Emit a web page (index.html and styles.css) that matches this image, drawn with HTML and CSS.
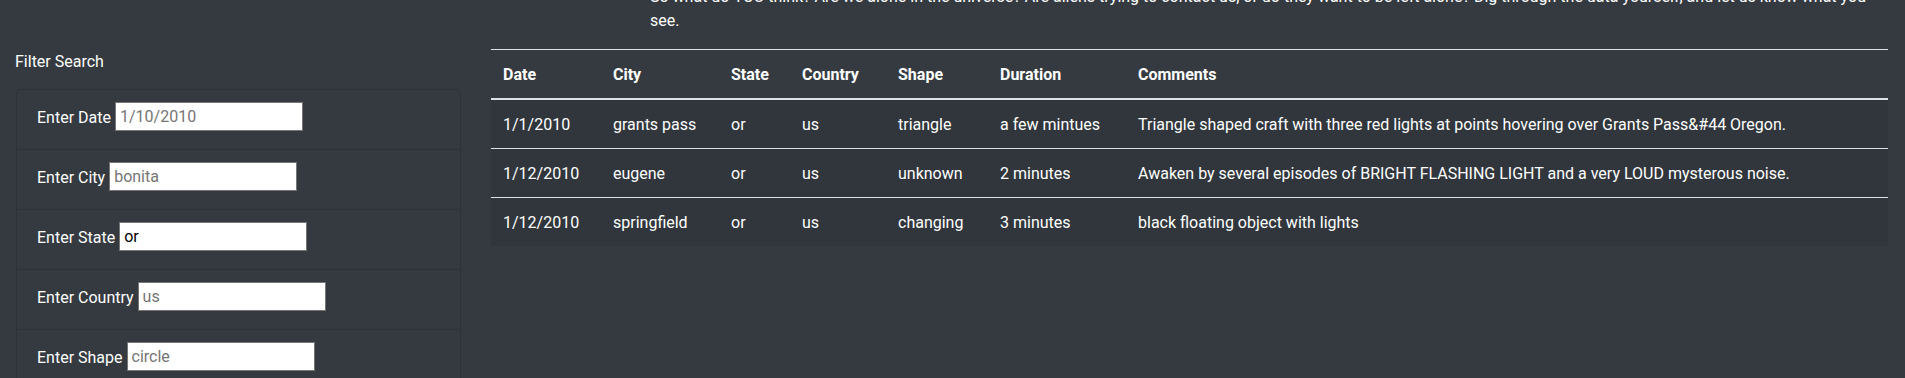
FILE: index.html
```html
<!DOCTYPE html>
<html lang="en">
<head>
  <meta charset="UTF-8">
  <meta name="viewport" content="width=device-width, initial-scale=1.0">
  <title>UFO Sightings</title>
  <link rel="stylesheet" href="styles.css">
</head>
<body>
  <div class="page">
    <div class="filters">
      <p class="filters-title">Filter Search</p>
      <ul class="filter-list">
        <li class="filter">
          <label for="datetime">Enter Date</label>
          <input id="datetime" type="text" placeholder="1/10/2010">
        </li>
        <li class="filter">
          <label for="city">Enter City</label>
          <input id="city" type="text" placeholder="bonita">
        </li>
        <li class="filter">
          <label for="state">Enter State</label>
          <input id="state" type="text" placeholder="ca" value="or">
        </li>
        <li class="filter">
          <label for="country">Enter Country</label>
          <input id="country" type="text" placeholder="us">
        </li>
        <li class="filter">
          <label for="shape">Enter Shape</label>
          <input id="shape" type="text" placeholder="circle">
        </li>
      </ul>
    </div>

    <div class="results">
      <p class="intro">So what do YOU think? Are we alone in the universe? Are aliens trying to contact us, or do they want to be left alone? Dig through the data yourself, and let us know what you see.</p>
      <table class="ufo-table">
        <thead>
          <tr>
            <th class="col-date">Date</th>
            <th class="col-city">City</th>
            <th class="col-state">State</th>
            <th class="col-country">Country</th>
            <th class="col-shape">Shape</th>
            <th class="col-duration">Duration</th>
            <th>Comments</th>
          </tr>
        </thead>
        <tbody>
          <tr>
            <td>1/1/2010</td>
            <td>grants pass</td>
            <td>or</td>
            <td>us</td>
            <td>triangle</td>
            <td>a few mintues</td>
            <td>Triangle shaped craft with three red lights at points hovering over Grants Pass&amp;#44 Oregon.</td>
          </tr>
          <tr>
            <td>1/12/2010</td>
            <td>eugene</td>
            <td>or</td>
            <td>us</td>
            <td>unknown</td>
            <td>2 minutes</td>
            <td>Awaken by several episodes of BRIGHT FLASHING LIGHT and a very LOUD mysterous noise.</td>
          </tr>
          <tr>
            <td>1/12/2010</td>
            <td>springfield</td>
            <td>or</td>
            <td>us</td>
            <td>changing</td>
            <td>3 minutes</td>
            <td>black floating object with lights</td>
          </tr>
        </tbody>
      </table>
    </div>
  </div>
</body>
</html>
```

FILE: styles.css
```css
body {
  margin: 0;
  background-color: #353a41;
  color: #fff;
  font-family: Roboto, "Liberation Sans", sans-serif;
  font-size: 16px;
  line-height: 24px;
  overflow: hidden;
}

.page {
  display: grid;
  grid-template-columns: 476px 1fr;
}

/* left column */
.filters {
  padding: 50px 15px 0 15px;
}

.filters-title {
  margin: 0 0 15px 0;
}

.filter-list {
  margin: 0 0 0 1px;
  padding: 0;
  list-style: none;
  border: 1px solid #2e3238;
  border-radius: 4px;
}

.filter {
  display: flex;
  align-items: center;
  gap: 4px;
  padding: 12px 20px 18px 20px;
  border-top: 1px solid #2e3238;
}

.filter:first-child {
  border-top: none;
}

.filter label {
  padding-top: 2px;
}

.filter input {
  box-sizing: border-box;
  width: 188px;
  height: 29px;
  padding: 0 4px;
  border: 1px solid #767676;
  background: #fff;
  color: #000;
  font-family: Roboto, "Liberation Sans", sans-serif;
  font-size: 16px;
}

.filter input::placeholder {
  color: #757575;
}

/* right column */
.results {
  padding: 0 17px 0 15px;
}

.intro {
  margin: -15px 0 16px 159px;
}

.ufo-table {
  width: 100%;
  border-collapse: collapse;
  table-layout: fixed;
}

.ufo-table th,
.ufo-table td {
  box-sizing: border-box;
  padding: 13px 12px 11px 12px;
  text-align: left;
  vertical-align: top;
  white-space: nowrap;
}

.ufo-table th {
  font-weight: bold;
  border-top: 1px solid #dee2e6;
  border-bottom: 2px solid #dee2e6;
}

.ufo-table tbody {
  background-color: #31363d;
}

.ufo-table tbody td {
  border-top: 1px solid #dee2e6;
}

.ufo-table tbody tr:first-child td {
  border-top: none;
}

.col-date { width: 110px; }
.col-city { width: 118px; }
.col-state { width: 71px; }
.col-country { width: 96px; }
.col-shape { width: 102px; }
.col-duration { width: 138px; }
```
